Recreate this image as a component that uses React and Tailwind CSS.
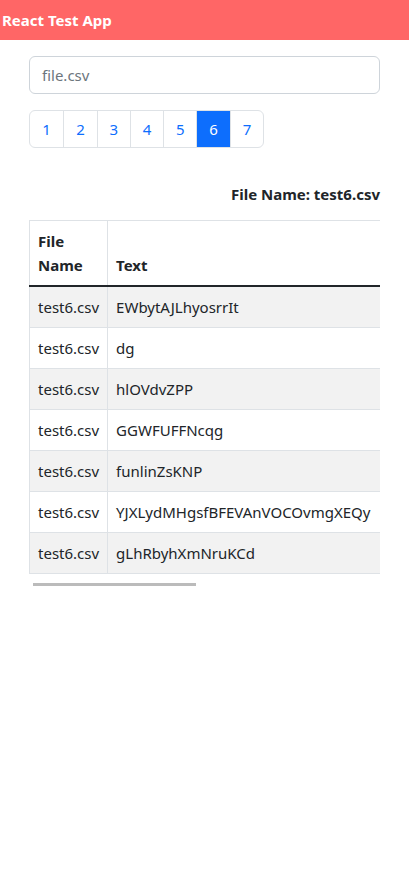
import React from "react";

const rows = [
  "EWbytAJLhyosrrIt",
  "dg",
  "hlOVdvZPP",
  "GGWFUFFNcqg",
  "funlinZsKNP",
  "YJXLydMHgsfBFEVAnVOCOvmgXEQy",
  "gLhRbyhXmNruKCd",
];

export default function App() {
  return (
    <div className="min-h-[893px] bg-white text-[#212529]" style={{ fontFamily: '"Noto Sans", "Open Sans", sans-serif' }}>
      <div className="h-[40px] bg-[#ff6666] flex items-center px-[2px]">
        <span className="text-white font-bold text-[15px]">React Test App</span>
      </div>
      <div className="px-[29px] pt-[16px]">
        <div className="h-[38px] border border-[#ced4da] rounded-[6px] flex items-center px-[12px] text-[15px] text-[#6c757d]">
          file.csv
        </div>
        <div className="mt-[16px] flex">
          <div className="flex border border-[#dee2e6] rounded-[6px] overflow-hidden h-[38px]">
            {[1, 2, 3, 4, 5, 6, 7].map((n, i) => (
              <div
                key={n}
                className={
                  "w-[33.3px] flex items-center justify-center text-[15px] " +
                  (i > 0 ? "border-l border-[#dee2e6] " : "") +
                  (n === 6 ? "bg-[#0d6efd] text-white" : "text-[#0d6efd]")
                }
              >
                {n}
              </div>
            ))}
          </div>
        </div>
        <div className="mt-[34px] text-right font-bold text-[15px] leading-[24px]">File Name: test6.csv</div>
        <div className="mt-[14px] overflow-hidden">
          <table className="w-[760px] border-collapse text-[15px] leading-[24px]">
            <thead>
              <tr>
                <th className="w-[76px] text-left align-bottom font-bold px-[8px] py-[8px] border border-[#dee2e6] border-b-2 border-b-[#212529]">
                  File Name
                </th>
                <th className="text-left align-bottom font-bold px-[8px] py-[8px] border border-[#dee2e6] border-b-2 border-b-[#212529]">
                  Text
                </th>
              </tr>
            </thead>
            <tbody>
              {rows.map((t, i) => (
                <tr key={i} className={i % 2 === 0 ? "bg-[#f2f2f2]" : "bg-white"}>
                  <td className="px-[8px] py-[8px] border border-[#dee2e6] whitespace-nowrap">test6.csv</td>
                  <td className="px-[8px] py-[8px] border border-[#dee2e6] whitespace-nowrap">{t}</td>
                </tr>
              ))}
            </tbody>
          </table>
        </div>
        <div className="mt-[9px] h-[3px] w-[163px] ml-[4px] bg-[#bbbbbb]"></div>
      </div>
    </div>
  );
}
